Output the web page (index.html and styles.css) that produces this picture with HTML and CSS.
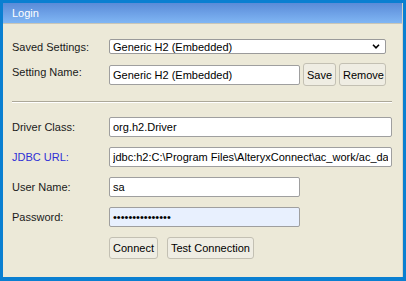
FILE: index.html
```html
<!DOCTYPE html>
<html lang="en">
  <head>
    <meta charset="UTF-8" />
    <title>Login</title>
    <link rel="stylesheet" href="styles.css">
  </head>
  <body>
    <div class="login">
      <div class="login-title">Login</div>
      <form class="login-form">
        <div class="row row-select">
          <label>Saved Settings:</label>
          <div class="select-wrap">
            <select class="select">
              <option>Generic H2 (Embedded)</option>
            </select>
            <svg class="chevron" width="8" height="5" viewBox="0 0 8 5">
              <path d="M1 0.8 L4 3.8 L7 0.8" fill="none" stroke="#000" stroke-width="1.6" />
            </svg>
          </div>
        </div>
        <div class="row row-name">
          <label>Setting Name:</label>
          <input class="field short" type="text" value="Generic H2 (Embedded)" />
          <button type="button" class="btn btn-save">Save</button>
          <button type="button" class="btn btn-remove">Remove</button>
        </div>

        <hr class="divider" />

        <div class="row">
          <label>Driver Class:</label>
          <input class="field long" type="text" value="org.h2.Driver" />
        </div>
        <div class="row">
          <label class="link-label">JDBC URL:</label>
          <input class="field long" type="text" value="jdbc:h2:C:\Program Files\AlteryxConnect\ac_work/ac_data" />
        </div>
        <div class="row">
          <label>User Name:</label>
          <input class="field short" type="text" value="sa" />
        </div>
        <div class="row">
          <label>Password:</label>
          <input class="field short password" type="password" value="sasasasasasasas" />
        </div>
        <div class="row row-actions">
          <button type="button" class="btn">Connect</button>
          <button type="button" class="btn">Test Connection</button>
        </div>
      </form>
    </div>
  </body>
</html>
```

FILE: styles.css
```css
html,
body {
  margin: 0;
  height: 100%;
}
body {
  background: #0a7fd1;
  font-family: "Liberation Sans", Arial, sans-serif;
  font-size: 11px;
  color: #1a1a1a;
  padding: 3px 3px 4px 3px;
  box-sizing: border-box;
}
.login {
  height: 100%;
  background: #ece9d8;
  border-right: 1px solid #d6d3c6;
}
.login-title {
  height: 20px;
  line-height: 20px;
  padding-left: 9px;
  color: #fff;
  background: linear-gradient(#5a8bd8, #80b6f4);
  border-bottom: 1px solid #c9c6b8;
}
.login-form {
  padding: 15px 10px 0 9px;
}
.row {
  display: flex;
  align-items: center;
  margin-bottom: 10px;
}
.row label {
  width: 97px;
  flex: none;
}
.row .link-label {
  color: #2f2fd6;
}
.row-select {
  margin-bottom: 9px;
}
.row-name label {
  align-self: flex-start;
  padding-top: 3px;
}
.select-wrap {
  position: relative;
}
.select {
  -webkit-appearance: none;
  appearance: none;
  width: 277px;
  height: 15px;
  box-sizing: border-box;
  border: 1px solid #9a9a9a;
  border-radius: 2px;
  background: #fff;
  padding: 0 3px;
  font: inherit;
  color: #000;
  display: block;
}
.chevron {
  position: absolute;
  right: 6px;
  top: 5px;
}
.field {
  height: 20px;
  box-sizing: border-box;
  border: 1px solid #9f9f9f;
  border-radius: 2px;
  background: #fff;
  padding: 0 3px;
  font: inherit;
  color: #000;
  margin: 0;
}
.short {
  width: 191px;
}
.long {
  width: 284px;
}
.password {
  background: #e8f0fe;
  letter-spacing: 0;
}
.btn {
  height: 23px;
  box-sizing: border-box;
  border: 1px solid #c3c0b3;
  border-radius: 3px;
  background: #efede3;
  font: inherit;
  color: #000;
  padding: 0 3px;
  margin: 0;
}
.btn-save {
  margin-left: 3px;
  width: 33px;
}
.btn-remove {
  margin-left: 3px;
  width: 47px;
}
.divider {
  border: 0;
  border-top: 1px solid #aca899;
  border-bottom: 1px solid #fff;
  margin: 15px 0 14px 0;
}
.row-actions {
  padding-left: 97px;
  gap: 9px;
}
.row-actions .btn {
  height: 22px;
}
```
